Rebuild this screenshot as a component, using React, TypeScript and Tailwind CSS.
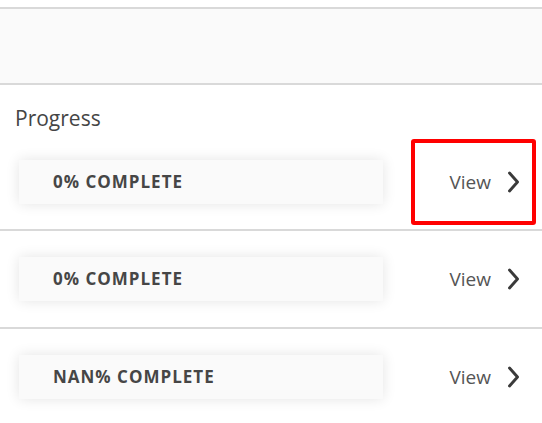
const rows = [
  { label: "0% complete", active: true },
  { label: "0% complete", active: false },
  { label: "NaN% complete", active: false },
];

function Chevron() {
  return (
    <svg width="13" height="22" viewBox="0 0 13 22" className="shrink-0">
      <polyline
        points="2.5,2 10.5,11 2.5,20"
        fill="none"
        stroke="#3a3a3a"
        strokeWidth="2.9"
        strokeLinecap="round"
        strokeLinejoin="round"
      />
    </svg>
  );
}

function ProgressRow({ label, active }: { label: string; active: boolean }) {
  return (
    <div className="flex items-center h-[86px]">
      <div className="ml-[19px] w-[364px] h-[44px] flex items-center pl-[34px] bg-[#fafafa] shadow-[0_0_14px_rgba(0,0,0,0.11)]">
        <span className="text-[17px] font-bold uppercase tracking-[1px] text-[#464646]">
          {label}
        </span>
      </div>
      <a
        href="#"
        className={`ml-auto mr-[6px] w-[125px] h-[86px] flex items-center justify-end gap-[16px] pr-[12px] border-4 rounded-[3px] ${
          active ? "border-[#ff0000]" : "border-transparent"
        }`}
      >
        <span className="text-[19px] text-[#555]">View</span>
        <Chevron />
      </a>
    </div>
  );
}

export default function App() {
  return (
    <div className="w-[542px] h-[423px] overflow-hidden bg-white font-['Open_Sans',sans-serif]">
      <div className="mt-[7px] h-[78px] bg-[#fafafa] border-y-2 border-[#d9d9d9]" />

      <div className="pt-[19px] pb-[4px] border-b-2 border-[#d9d9d9]">
        <h2 className="pl-[15px] text-[21px] leading-[28px] text-[#454545] mb-[7px]">
          Progress
        </h2>
        <ProgressRow {...rows[0]} />
      </div>

      {rows.slice(1).map((row, i) => (
        <div key={i} className="py-[5px] border-b-2 border-[#d9d9d9]">
          <ProgressRow {...row} />
        </div>
      ))}
    </div>
  );
}
